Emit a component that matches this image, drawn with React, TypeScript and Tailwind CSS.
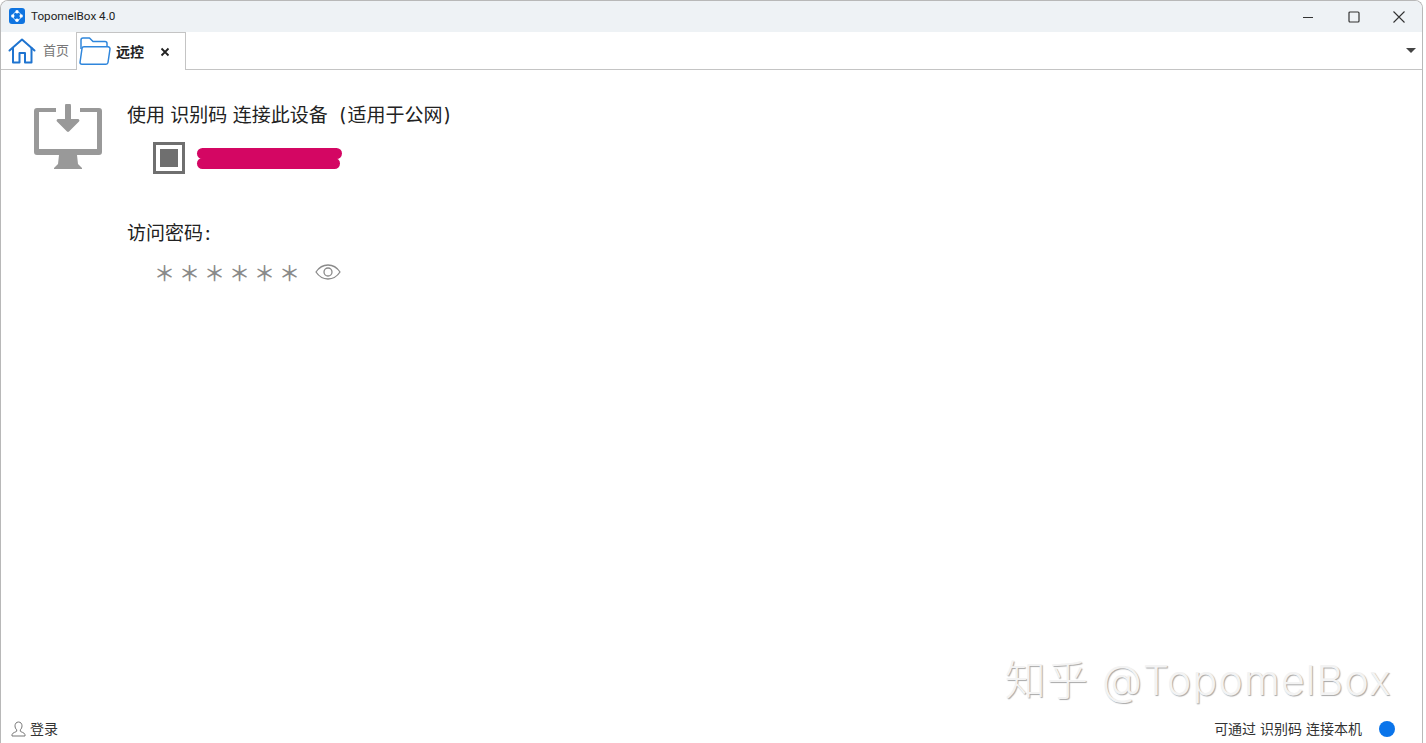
import React from "react";

const cjk = "font-['Inter','Noto_Sans_CJK_SC',sans-serif]";

function Logo() {
  return (
    <svg width="16" height="16" viewBox="0 0 16 16">
      <rect width="16" height="16" rx="3" fill="#0f74e0" />
      <circle cx="8" cy="8" r="4" fill="none" stroke="#9fd0ff" strokeWidth="1" />
      <circle cx="8" cy="3.8" r="1.7" fill="#fff" />
      <circle cx="8" cy="12.2" r="1.7" fill="#fff" />
      <circle cx="3.8" cy="8" r="1.7" fill="#fff" />
      <circle cx="12.2" cy="8" r="1.7" fill="#fff" />
    </svg>
  );
}

function HomeIcon() {
  return (
    <svg width="28" height="26" viewBox="0 0 28 26" fill="none" stroke="#1f74d0" strokeWidth="2" strokeLinejoin="round" strokeLinecap="round">
      <path d="M1.5 12.5 14 1.5l12.5 11" />
      <path d="M5 10v14.5h6.5V15h5.5v9.5h6.5V10" />
    </svg>
  );
}

function FolderIcon() {
  return (
    <svg width="32" height="29" viewBox="0 0 32 29" fill="none" stroke="#2f86dc" strokeWidth="1.5" strokeLinejoin="round">
      <path d="M2 12V3a2 2 0 0 1 2-2h6.5l3.500 3.500h12a2 2 0 0 1 2 2V9" />
      <path d="M1 25.500 3 11.500a2 2 0 0 1 2-1.700h24a2 2 0 0 1 2 2.200l-2 13.500a2 2 0 0 1-2 1.700H3a2 2 0 0 1-2-2Z" />
    </svg>
  );
}

function MonitorIcon() {
  return (
    <svg width="68" height="66" viewBox="0 0 68 66" fill="#999999">
      <path d="M3 4h19v4H5v37h58V8H46V4h19a3 3 0 0 1 3 3v41a3 3 0 0 1-3 3H3a3 3 0 0 1-3-3V7a3 3 0 0 1 3-3Z" />
      <path d="M25 51h18l1 9 4 4v1H20v-1l4-4Z" />
      <path d="M31 2a3 3 0 0 1 6 0v13h7a1.500 1.500 0 0 1 1 2.500L35 27.500a1.500 1.500 0 0 1-2 0L23 17.500a1.500 1.500 0 0 1 1-2.500h7Z" />
    </svg>
  );
}

function EyeIcon() {
  return (
    <svg width="26" height="16" viewBox="0 0 26 16" fill="none" stroke="#8a8a8a" strokeWidth="1.300">
      <path d="M1 8c3-4.500 7-7 12-7s9 2.500 12 7c-3 4.500-7 7-12 7S4 12.500 1 8Z" />
      <circle cx="13" cy="8" r="4" />
    </svg>
  );
}

function UserIcon() {
  return (
    <svg width="15" height="16" viewBox="0 0 15 16" fill="none" stroke="#777777" strokeWidth="1">
      <path d="M7.500 1C5.300 1 4 2.700 4 4.800c0 1.700.7 3.200 1.700 4v1.400c0 .6-4.700 1.500-4.700 3.500v1.300h13v-1.300c0-2-4.700-2.900-4.700-3.500V8.800c1-.8 1.700-2.300 1.700-4C11 2.700 9.700 1 7.500 1Z" />
    </svg>
  );
}

export default function App() {
  return (
    <div className={`flex h-screen w-[1423px] flex-col overflow-hidden rounded-t-lg border-x border-t border-[#b8b8b8] bg-white ${cjk}`}>
      <header className="flex h-[31px] shrink-0 items-center bg-[#eef2f5]">
        <div className="ml-[8px] flex items-center">
          <Logo />
          <span className="ml-[6px] font-['Roboto','Noto_Sans_CJK_SC',sans-serif] text-[11.7px] text-[#222222]">TopomelBox 4.0</span>
        </div>
        <div className="ml-auto flex items-center gap-[33px] pr-[17px]">
          <svg width="12" height="12" viewBox="0 0 12 12" stroke="#333333" strokeWidth="1.100"><path d="M0 6.500h10" /></svg>
          <svg width="12" height="12" viewBox="0 0 12 12" fill="none" stroke="#333333" strokeWidth="1.200"><rect x="1" y="1" width="10" height="10" rx="1" /></svg>
          <svg width="12" height="12" viewBox="0 0 12 12" stroke="#333333" strokeWidth="1.100"><path d="M.5.500l11 11M11.500.500l-11 11" /></svg>
        </div>
      </header>

      <nav className="relative flex h-[38px] shrink-0 items-stretch border-b border-[#c4c4c4] pl-[7px]">
        <div className="flex w-[68px] items-center pt-[1px]">
          <HomeIcon />
          <span className="ml-[7px] whitespace-nowrap text-[13px] text-[#777777]">首页</span>
        </div>
        <div className="relative -mb-px flex w-[110px] items-center border-x border-t border-[#c4c4c4] bg-white pl-[2px]">
          <FolderIcon />
          <span className="ml-[5px] whitespace-nowrap text-[14px] font-bold text-[#222222]">远控</span>
          <svg className="ml-[16px]" width="10" height="10" viewBox="0 0 10 10" stroke="#222222" strokeWidth="1.800"><path d="M1.500 1.500l7 7M8.500 1.500l-7 7" /></svg>
        </div>
        <div className="ml-auto flex items-center pr-[6px]">
          <div className="h-0 w-0 border-x-[5px] border-t-[5px] border-x-transparent border-t-[#444444]" />
        </div>
      </nav>

      <main className="flex min-h-0 flex-1 flex-col">
        <div className="flex pl-[33px] pt-[33px]">
          <div className="pt-[1px]"><MonitorIcon /></div>
          <div className="ml-[25px] flex flex-col">
            <p className="whitespace-nowrap text-[19px] leading-[26px] text-[#222222]">使用 识别码 连接此设备<span className="ml-[6px]"> (<span className="mx-[1.5px]">适用于公网</span>)</span></p>
            <div className="ml-[26px] mt-[13px] flex items-center">
              <div className="flex h-[32px] w-[32px] items-center justify-center border-[3px] border-[#6f6f6f] bg-white">
                <div className="h-[18px] w-[18px] bg-[#6f6f6f]" />
              </div>
              <div className="ml-[12px] flex flex-col">
                <div className="h-[11px] w-[145px] rounded-full bg-[#d40663]" />
                <div className="-mt-[1px] h-[11px] w-[143px] rounded-full bg-[#d40663]" />
              </div>
            </div>
            <p className="mt-[47px] whitespace-nowrap text-[19px] leading-[26px] text-[#222222]">访问密码<span className="ml-[2px]">:</span></p>
            <div className="ml-[27px] mt-[12px] flex items-center">
              <span className="w-[155px] whitespace-nowrap font-['Noto_Sans_CJK_SC',sans-serif] text-[21px] font-medium leading-[26px] tracking-[4px] text-[#8a8a8a]">＊＊＊＊＊＊</span>
              <span className="ml-[6px]"><EyeIcon /></span>
            </div>
          </div>
        </div>

        <div className="mt-auto flex justify-end pb-[13px] pr-[30px]">
          <span className="whitespace-nowrap font-['Inter','Noto_Sans_CJK_SC',sans-serif] text-[41px] font-light leading-[46px] tracking-[1.200px] text-[#f3f3f3] [text-shadow:1px_1px_1px_#a8a8a8]">知乎 @TopomelBox</span>
        </div>

        <footer className="flex h-[27px] shrink-0 items-center pb-[2px] pl-[10px] pr-[27px]">
          <UserIcon />
          <span className="ml-[4px] text-[14px] text-[#333333]">登录</span>
          <span className="ml-auto whitespace-nowrap text-[14px] text-[#333333]">可通过 识别码 连接本机</span>
          <span className="ml-[17px] h-[16px] w-[16px] rounded-full bg-[#0a74ea]" />
        </footer>
      </main>
    </div>
  );
}
